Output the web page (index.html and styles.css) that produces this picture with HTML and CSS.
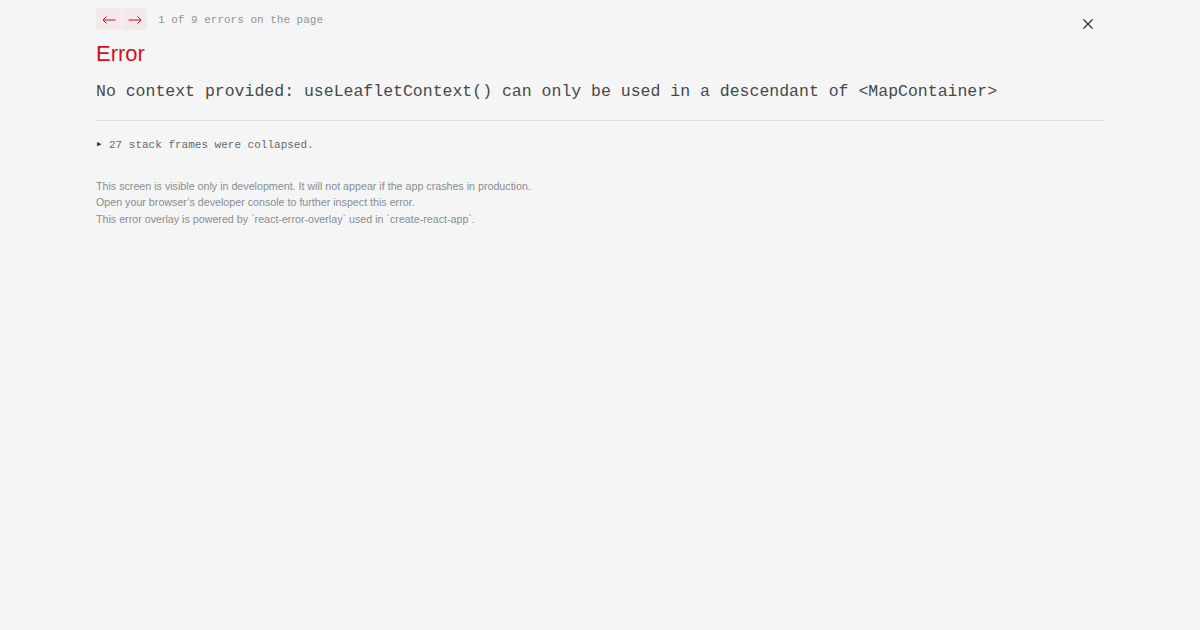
FILE: index.html
```html
<!DOCTYPE html>
<html lang="en">
<head>
<meta charset="utf-8">
<title>Error overlay</title>
<link rel="stylesheet" href="styles.css">
</head>
<body>
<div class="overlay">
  <div class="nav">
    <div class="nav-buttons">
      <button class="nav-btn nav-prev" type="button" aria-label="Previous error">
        <svg width="14" height="8" viewBox="0 0 14 8"><path d="M13.5 4 H1 M4.5 0.5 L1 4 L4.5 7.5" stroke="#ce1126" stroke-width="1" fill="none"/></svg>
      </button>
      <button class="nav-btn nav-next" type="button" aria-label="Next error">
        <svg width="14" height="8" viewBox="0 0 14 8"><path d="M0.5 4 H13 M9.5 0.5 L13 4 L9.5 7.5" stroke="#ce1126" stroke-width="1" fill="none"/></svg>
      </button>
    </div>
    <span class="nav-count">1 of 9 errors on the page</span>
  </div>
  <button class="close" type="button" aria-label="Close">
    <svg width="10" height="10" viewBox="0 0 10 10"><path d="M0.5 0.5 L9.5 9.5 M9.5 0.5 L0.5 9.5" stroke="#293238" stroke-width="1.2" fill="none"/></svg>
  </button>
  <h1 class="title">Error</h1>
  <div class="message">No context provided: useLeafletContext() can only be used in a descendant of &lt;MapContainer&gt;</div>
  <div class="frames"><span class="tri">▶</span>27 stack frames were collapsed.</div>
  <div class="footer">
    <div>This screen is visible only in development. It will not appear if the app crashes in production.</div>
    <div>Open your browser’s developer console to further inspect this error.</div>
    <div>This error overlay is powered by `react-error-overlay` used in `create-react-app`.</div>
  </div>
</div>
</body>
</html>
```

FILE: styles.css
```css
html, body {
  margin: 0;
  padding: 0;
  background: #f5f5f5;
}
.overlay {
  position: relative;
  width: 1024px;
  margin: 0 auto;
  padding: 8px;
  box-sizing: border-box;
  font-family: "Liberation Mono", monospace;
  font-size: 11px;
  line-height: 1.5;
  color: #293238;
}
.nav {
  display: flex;
  align-items: center;
  height: 22px;
}
.nav-buttons {
  display: flex;
  gap: 1px;
  margin-right: 11px;
}
.nav-btn {
  width: 25px;
  height: 22px;
  padding: 1px 0 0 0;
  border: none;
  background: rgba(206, 17, 38, 0.05);
  display: flex;
  align-items: center;
  justify-content: center;
  cursor: pointer;
}
.nav-prev { border-radius: 4px 0 0 4px; }
.nav-next { border-radius: 0 4px 4px 0; }
.nav-count {
  color: #8f9597;
  line-height: 22px;
  padding-top: 1px;
}
.close {
  position: absolute;
  top: 19px;
  right: 19px;
  width: 10px;
  height: 10px;
  padding: 0;
  border: none;
  background: transparent;
  display: flex;
}
.title {
  margin: 9px 0 0 0;
  font-family: "Liberation Sans", sans-serif;
  font-weight: normal;
  font-size: 22px;
  line-height: 30px;
  color: #ce1126;
}
.message {
  margin-top: 11px;
  font-size: 16.5px;
  line-height: 24px;
  color: #45494b;
  padding-bottom: 16px;
  border-bottom: 1px solid #dedede;
}
.frames {
  margin-top: 16px;
  color: #65696c;
}
.tri {
  display: inline-block;
  width: 13px;
  font-size: 7px;
  vertical-align: 2px;
  color: #293238;
  padding-left: 1px;
  box-sizing: border-box;
}
.footer {
  margin-top: 24px;
  font-family: "Liberation Sans", sans-serif;
  font-size: 10.7px;
  line-height: 16.5px;
  color: #878e91;
}
```
